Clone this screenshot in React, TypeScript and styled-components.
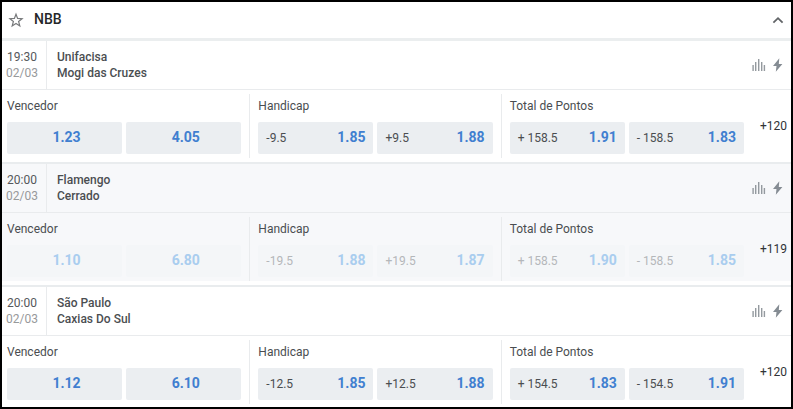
import React from "react";
import styled, { createGlobalStyle } from "styled-components";

const GlobalStyle = createGlobalStyle`
  *, *::before, *::after { box-sizing: border-box; }
  body {
    margin: 0;
    background: #fff;
    font-family: Roboto, "Liberation Sans", sans-serif;
    font-size: 12px;
    line-height: 16px;
    color: #3c4043;
  }
  button {
    font: inherit;
    color: inherit;
    border: 0;
    padding: 0;
    background: none;
    cursor: pointer;
  }
`;

const Board = styled.main`
  border: 2px solid #000;
  background: #fff;
`;

const LeagueHeader = styled.header`
  display: flex;
  align-items: center;
  gap: 10px;
  height: 39px;
  padding: 0 6px;
  border-bottom: 3px solid #ebeeef;
`;

const LeagueName = styled.h1`
  flex: 1;
  margin: 0;
  font-size: 14px;
  line-height: 20px;
  padding-bottom: 2px;
  font-weight: 500;
  color: #252729;
`;

const IconButton = styled.button`
  display: flex;
  align-items: center;
  justify-content: center;
`;

const Match = styled.article<{ $suspended: boolean }>`
  border-bottom: 2px solid #e9ecee;
  background: ${(p) => (p.$suspended ? "#f7f8fa" : "#fff")};
  box-shadow: ${(p) => (p.$suspended ? "inset 0 -4px #fff" : "none")};
  &:last-child { border-bottom: 0; }
`;

const MatchHeader = styled.div`
  display: flex;
  height: 49px;
  border-bottom: 1px solid #e9ebed;
`;

const Kickoff = styled.div`
  display: flex;
  flex-direction: column;
  justify-content: center;
  align-items: center;
  width: 45px;
  padding-right: 4px;
  border-right: 1px solid #e9ebed;
`;

const KickoffTime = styled.time`
  color: #55585b;
`;

const KickoffDate = styled.span`
  color: #97999b;
`;

const Teams = styled.div`
  display: flex;
  flex: 1;
  flex-direction: column;
  justify-content: center;
  padding-left: 10px;
  font-weight: 500;
  color: #4b4e51;
`;

const Tools = styled.div`
  display: flex;
  align-items: center;
  gap: 6px;
  padding-right: 7px;
`;

const MatchBody = styled.div<{ $last: boolean }>`
  display: flex;
  padding: 4px 4px ${(p) => (p.$last ? 3 : 4)}px 5px;
`;

const Market = styled.section`
  box-sizing: content-box;
  flex: 1 1 0;
  min-width: 0;
  padding: 4px 8px;
  border-left: 1px solid #e9ebed;
  &:first-child { padding-left: 0; border-left: 0; }
`;

const MarketName = styled.h2`
  margin: 0 0 8px;
  font-size: 12px;
  line-height: 16px;
  font-weight: 400;
  color: #4a4d50;
`;

const Selections = styled.div`
  display: grid;
  grid-template-columns: 1fr 1fr;
  gap: 4px;
`;

const Selection = styled.button<{ $single: boolean }>`
  display: flex;
  align-items: center;
  justify-content: ${(p) => (p.$single ? "center" : "space-between")};
  height: 32px;
  padding: ${(p) => (p.$single ? "0 4px 0 8px" : "0 8px")};
  border-radius: 2px;
  background: #ebeef1;
  &:disabled {
    background: #f4f6f8;
    cursor: default;
  }
`;

const Line = styled.span`
  color: #4a4d50;
  ${Selection}:disabled & { color: #b4b7ba; }
`;

const Price = styled.span`
  padding-bottom: 2px;
  font-size: 14px;
  font-weight: 700;
  color: #407fd0;
  ${Selection}:disabled & { color: #a9cdef; }
`;

const MoreMarkets = styled.button`
  width: 35px;
  text-align: right;
  color: #303336;
`;

const StarIcon = () => (
  <svg width="16" height="16" viewBox="0 0 16 16" fill="none" stroke="#77797b" strokeWidth="1.2" strokeLinejoin="miter">
    <path d="M8 2.2 9.6 6.4 14.1 6.7 10.6 9.5 11.8 13.9 8 11.5 4.2 13.9 5.4 9.5 1.9 6.7 6.4 6.4Z" />
  </svg>
);

const ChevronIcon = () => (
  <svg width="14" height="14" viewBox="0 0 14 14" fill="none" stroke="#616467" strokeWidth="1.8">
    <path d="M2.4 9.7 7 5.2 11.6 9.7" />
  </svg>
);

const StatsIcon = () => (
  <svg width="14" height="14" viewBox="0 0 14 14" fill="#949a9f">
    <path d="M.4 7h1.4v6H.4zM3 4h1.4v9H3zM6 1h1.4v12H6zM9 4h1.4v9H9zM11.7 7h1.4v6h-1.4z" />
  </svg>
);

const BoltIcon = () => (
  <svg width="12" height="14" viewBox="0 0 12 14" fill="#858c93">
    <path d="M7.3.2 1 7.9H4.5L3.8 13.8 10.4 6H6.8Z" />
  </svg>
);

type Option = { line?: string; price: string };
type MatchData = {
  time: string;
  home: string;
  away: string;
  more: string;
  suspended?: boolean;
  markets: { name: string; options: Option[] }[];
};

const markets = (winner: string[], handicap: string[][], total: string[][]) => [
  { name: "Vencedor", options: winner.map((price) => ({ price })) },
  { name: "Handicap", options: handicap.map(([line, price]) => ({ line, price })) },
  { name: "Total de Pontos", options: total.map(([line, price]) => ({ line, price })) },
];

const matches: MatchData[] = [
  {
    time: "19:30",
    home: "Unifacisa",
    away: "Mogi das Cruzes",
    more: "+120",
    markets: markets(["1.23", "4.05"], [["-9.5", "1.85"], ["+9.5", "1.88"]], [["+ 158.5", "1.91"], ["- 158.5", "1.83"]]),
  },
  {
    time: "20:00",
    home: "Flamengo",
    away: "Cerrado",
    more: "+119",
    suspended: true,
    markets: markets(["1.10", "6.80"], [["-19.5", "1.88"], ["+19.5", "1.87"]], [["+ 158.5", "1.90"], ["- 158.5", "1.85"]]),
  },
  {
    time: "20:00",
    home: "São Paulo",
    away: "Caxias Do Sul",
    more: "+120",
    markets: markets(["1.12", "6.10"], [["-12.5", "1.85"], ["+12.5", "1.88"]], [["+ 154.5", "1.83"], ["- 154.5", "1.91"]]),
  },
];

export default function App() {
  return (
    <>
      <GlobalStyle />
      <Board>
        <LeagueHeader>
          <IconButton aria-label="Favorito"><StarIcon /></IconButton>
          <LeagueName>NBB</LeagueName>
          <IconButton aria-label="Recolher"><ChevronIcon /></IconButton>
        </LeagueHeader>
        {matches.map((match, index) => (
          <Match key={match.home} $suspended={!!match.suspended}>
            <MatchHeader>
              <Kickoff>
                <KickoffTime>{match.time}</KickoffTime>
                <KickoffDate>02/03</KickoffDate>
              </Kickoff>
              <Teams>
                <span>{match.home}</span>
                <span>{match.away}</span>
              </Teams>
              <Tools>
                <IconButton aria-label="Estatísticas"><StatsIcon /></IconButton>
                <IconButton aria-label="Ao vivo"><BoltIcon /></IconButton>
              </Tools>
            </MatchHeader>
            <MatchBody $last={index === matches.length - 1}>
              {match.markets.map((market) => (
                <Market key={market.name}>
                  <MarketName>{market.name}</MarketName>
                  <Selections>
                    {market.options.map((option, i) => (
                      <Selection key={i} $single={!option.line} disabled={match.suspended}>
                        {option.line && <Line>{option.line}</Line>}
                        <Price>{option.price}</Price>
                      </Selection>
                    ))}
                  </Selections>
                </Market>
              ))}
              <MoreMarkets>{match.more}</MoreMarkets>
            </MatchBody>
          </Match>
        ))}
      </Board>
    </>
  );
}
